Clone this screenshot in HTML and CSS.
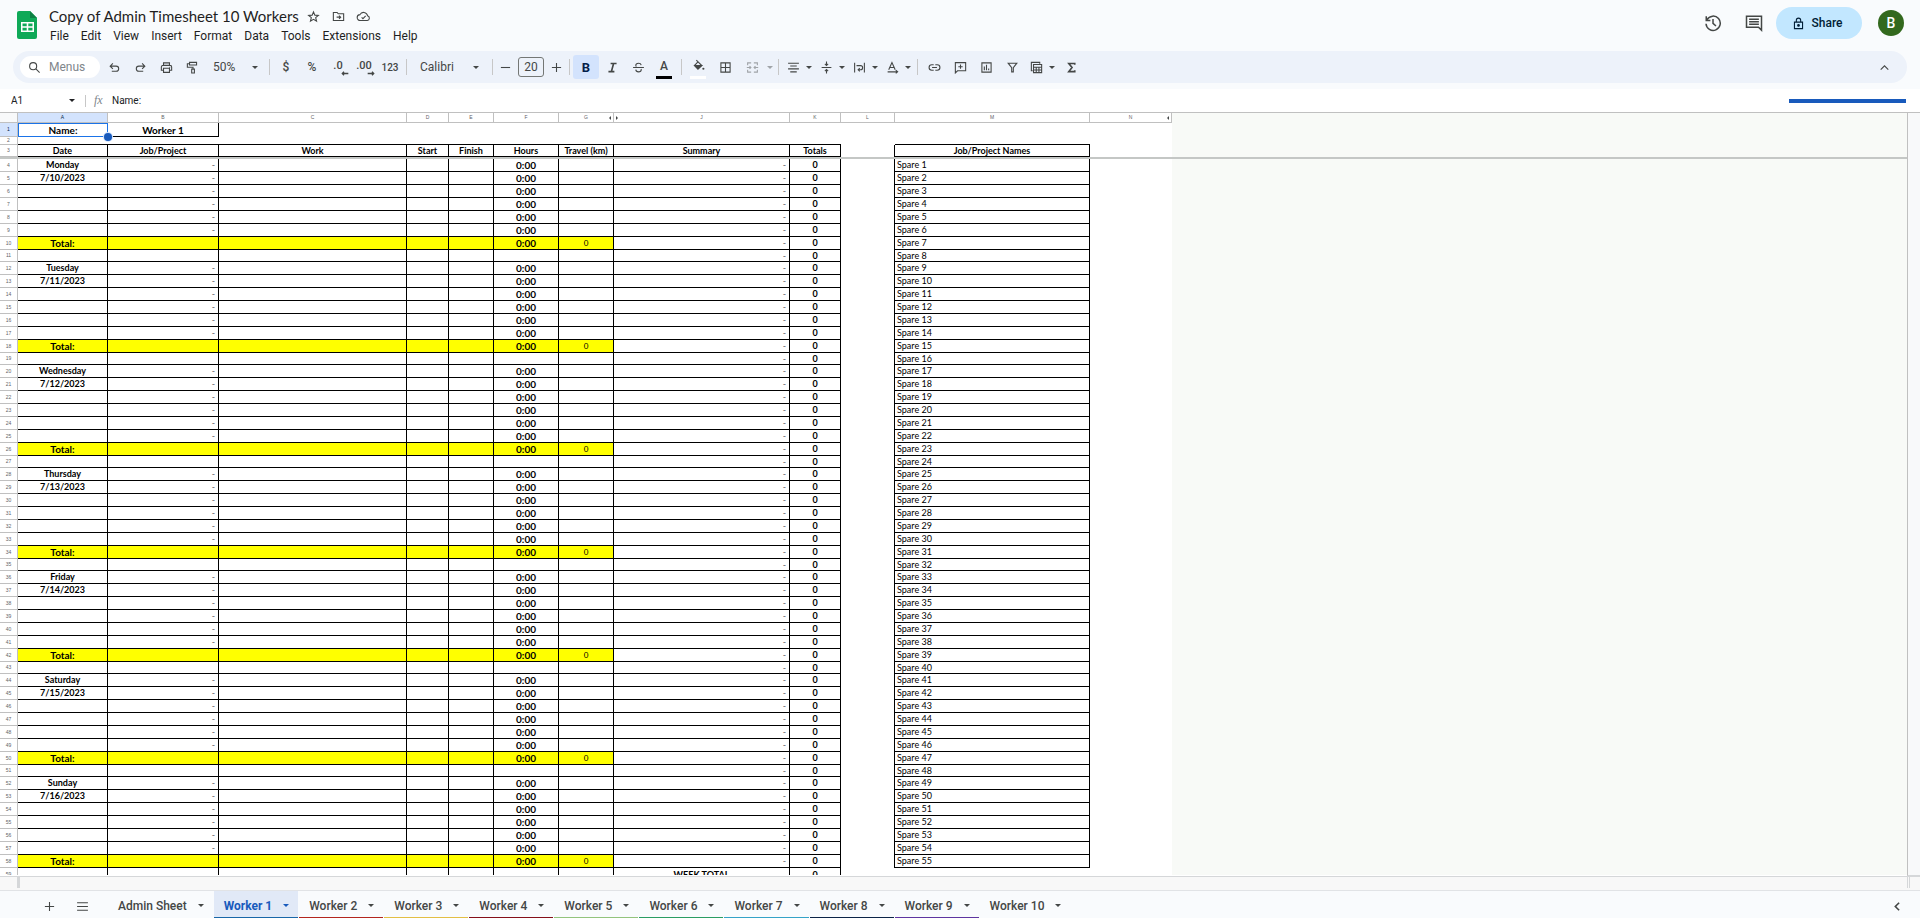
FILE: index.html
```html
<!DOCTYPE html>
<html lang="en">
<head>
<meta charset="utf-8">
<title>Copy of Admin Timesheet 10 Workers</title>
<link rel="stylesheet" href="styles.css">
</head>
<body>
<svg class="sprite" aria-hidden="true">
  <symbol id="caret" viewBox="0 0 8 4"><path d="M0 0h8L4 4z" fill="currentColor"/></symbol>
</svg>

<div class="chrome">
  <header class="header">
    <svg class="logo" viewBox="0 0 20 28" aria-label="Sheets">
      <path d="M2 0h11l7 7v19a2 2 0 0 1-2 2H2a2 2 0 0 1-2-2V2a2 2 0 0 1 2-2z" fill="#0fa958"/>
      <path d="M13 0l7 7h-7z" fill="#0b8043"/>
      <path d="M4 11h13v10H4zM5.500 12.500v2.700h4.200v-2.700zM11.300 12.500v2.700h4.200v-2.700zM5.500 16.800v2.700h4.200v-2.700zM11.300 16.800v2.700h4.200v-2.700z" fill="#fff" fill-rule="evenodd"/>
    </svg>
    <div class="heading">
      <div class="title-row">
        <h1 class="title">Copy of Admin Timesheet 10 Workers</h1>
        <button class="mini" aria-label="Star"><svg class="line" viewBox="0 0 24 24"><path d="M12 3.500l2.500 6 6.500.5-5 4.200 1.600 6.300L12 17.100l-5.600 3.400L8 14.200 3 10l6.500-.5z"/></svg></button>
        <button class="mini" aria-label="Move"><svg class="line" viewBox="0 0 24 24"><path d="M2.500 4.500h7l2 2.500h10v12.500h-19zM8.500 13.200h7M13 10.200l3 3-3 3"/></svg></button>
        <button class="mini" aria-label="Saved to Drive"><svg class="line wide" viewBox="0 0 28 24"><path d="M8 19.500a5.500 5.500 0 0 1-.6-11A7.500 7.500 0 0 1 21.500 10.500 4.600 4.600 0 0 1 21 19.500zM10.500 13.500l2.500 2.500 5-5"/></svg></button>
      </div>
      <nav class="menus">
        <button>File</button><button>Edit</button><button>View</button><button>Insert</button><button>Format</button><button>Data</button><button>Tools</button><button>Extensions</button><button>Help</button>
      </nav>
    </div>
    <div class="actions">
      <button class="action" aria-label="Version history"><svg class="line" viewBox="0 0 24 24"><path d="M4 7.500A9.500 9.500 0 1 1 2.700 13M3 3v5.500h5.500M12 6.500V12.500l4 3.500"/></svg></button>
      <button class="action" aria-label="Comments"><svg class="line" viewBox="0 0 24 24"><path d="M2 3h20v18.500L18 17.500H2zM5.500 7h13M5.500 10.300h13M5.500 13.500h13"/></svg></button>
      <button class="share"><svg class="line" viewBox="0 0 24 24"><path d="M4.500 9.500h15v12h-15zM8 9V6a4 4 0 0 1 8 0v3"/><circle cx="12" cy="15.500" r="1.500" fill="currentColor"/></svg>Share</button>
      <button class="avatar" aria-label="Account">B</button>
    </div>
  </header>

  <div class="toolbar" role="toolbar">
    <label class="search"><svg class="line" viewBox="0 0 24 24"><circle cx="9.500" cy="9.500" r="6.500"/><path d="M14.500 14.500l7 7"/></svg><input type="text" placeholder="Menus" aria-label="Menus"></label>
    <button class="tool" aria-label="Undo"><svg class="line" viewBox="0 0 24 24"><path d="M9 4.500L4 9.500l5 5M4 9.500h11a4.700 4.700 0 0 1 0 9.500H7"/></svg></button>
    <button class="tool" aria-label="Redo"><svg class="line" viewBox="0 0 24 24"><path d="M15 4.500l5 5-5 5M20 9.500H9a4.700 4.700 0 0 0 0 9.500h8"/></svg></button>
    <button class="tool" aria-label="Print"><svg class="line" viewBox="0 0 24 24"><path d="M6.500 8V3.500h11V8M6.500 17H2.500v-6a3 3 0 0 1 3-3h13a3 3 0 0 1 3 3v6h-4M6.500 13.500h11V21h-11z"/><circle cx="18" cy="11.500" r="1" fill="currentColor" stroke="none"/></svg></button>
    <button class="tool" aria-label="Paint format"><svg class="line" viewBox="0 0 24 24"><path d="M6.500 2.500h13v5h-13zM6.500 5h-4v6.500H13V15M10.500 15h5v7h-5z"/></svg></button>
    <span class="select zoom"><select aria-label="Zoom"><option>50%</option></select><svg class="caret"><use href="#caret"/></svg></span>
    <i class="divider"></i>
    <button class="tool text">$</button>
    <button class="tool text">%</button>
    <button class="tool text decimal" aria-label="Decrease decimal places">.0<svg class="line" viewBox="0 0 12 6"><path d="M11 3H2M4.500.5L2 3l2.500 2.500"/></svg></button>
    <button class="tool text decimal" aria-label="Increase decimal places">.00<svg class="line" viewBox="0 0 12 6"><path d="M1 3h9M7.500.5L10 3 7.500 5.500"/></svg></button>
    <button class="tool text small">123</button>
    <i class="divider"></i>
    <span class="select font"><select aria-label="Font"><option>Calibri</option></select><svg class="caret"><use href="#caret"/></svg></span>
    <i class="divider"></i>
    <button class="step" aria-label="Decrease font size"><svg class="line" viewBox="0 0 24 24"><path d="M3.500 12h17"/></svg></button>
    <input class="size" type="text" value="20" aria-label="Font size">
    <button class="step" aria-label="Increase font size"><svg class="line" viewBox="0 0 24 24"><path d="M3.500 12h17M12 3.500v17"/></svg></button>
    <i class="divider"></i>
    <button class="tool text on bold">B</button>
    <button class="tool" aria-label="Italic"><svg class="line heavy" viewBox="0 0 24 24"><path d="M8.500 4.500h11M4.500 19.500h11M14 4.500l-4 15"/></svg></button>
    <button class="tool" aria-label="Strikethrough"><svg class="line" viewBox="0 0 24 24"><path d="M2 12h20M17 7.500C16.500 5 14.500 4 12 4S7 5.200 7 8c0 1 .4 1.700 1 2.300M7 16c.3 2.700 2.300 4 5 4s5-1.200 5-4c0-.6-.1-1-.3-1.400"/></svg></button>
    <button class="tool text swatch black">A</button>
    <i class="divider wide"></i>
    <div class="cell-tools">
      <button class="tool swatch white" aria-label="Fill color"><svg class="line" viewBox="0 0 24 24"><path d="M8 2l10 10-7 6.500L4.500 12 11 5.500"/><path d="M5 12h13l-7 6.500z" fill="currentColor"/><circle cx="21" cy="18" r="2" fill="currentColor" stroke="none"/></svg></button>
      <button class="tool" aria-label="Borders"><svg class="line" viewBox="0 0 24 24"><path d="M3.500 3.500h17v17h-17zM12 3.500v17M3.500 12h17"/></svg></button>
      <button class="tool faded" aria-label="Merge cells"><svg class="line" viewBox="0 0 24 24"><path d="M9.500 3.500H3V8M14.500 3.500H21V8M3 16v4.500h6.500M21 16v4.500h-6.500M1.500 12H9M6.500 9.500L9 12l-2.500 2.500M22.500 12H15M17.500 9.500L15 12l2.500 2.500"/></svg></button>
      <button class="drop faded" aria-label="Merge type"><svg class="caret"><use href="#caret"/></svg></button>
    </div>
    <i class="divider wide"></i>
    <button class="split" aria-label="Horizontal align"><svg class="line" viewBox="0 0 24 24"><path d="M2 4h20M6 9.300h12M2 14.600h20M6 20h12"/></svg><svg class="caret"><use href="#caret"/></svg></button>
    <button class="split" aria-label="Vertical align"><svg class="line" viewBox="0 0 24 24"><path d="M3 12h18M12 1v7M12 23v-7M9 5.500l3 3 3-3M9 18.500l3-3 3 3"/></svg><svg class="caret"><use href="#caret"/></svg></button>
    <button class="split" aria-label="Text wrapping"><svg class="line" viewBox="0 0 24 24"><path d="M3 3v18M21 3v18M6.500 8.500H14a3.500 3.500 0 0 1 0 7.500h-4M12.500 13L9.500 16l3 3"/></svg><svg class="caret"><use href="#caret"/></svg></button>
    <button class="split" aria-label="Text rotation"><svg class="line" viewBox="0 0 24 24"><path d="M5 16l6-13 6 13M7 12h8M3 20h18M18 17l3.500 3-3.500 3"/></svg><svg class="caret"><use href="#caret"/></svg></button>
    <i class="divider"></i>
    <button class="tool" aria-label="Insert link"><svg class="line" viewBox="0 0 24 24"><path d="M10.500 7H7a5 5 0 0 0 0 10h3.500M13.500 7H17a5 5 0 0 1 0 10h-3.500M7.500 12h9"/></svg></button>
    <button class="tool" aria-label="Insert comment"><svg class="line" viewBox="0 0 24 24"><path d="M2.500 3h19v15H6.500l-4 4zM12 6.500v8M8 10.500h8"/></svg></button>
    <button class="tool" aria-label="Insert chart"><svg class="line" viewBox="0 0 24 24"><path d="M3.500 3.500h17v17h-17zM8 10v7M12 7v10M16 14v3"/></svg></button>
    <button class="tool" aria-label="Create a filter"><svg class="line" viewBox="0 0 24 24"><path d="M4 4h16l-6.500 8.500V20h-3v-7.500z"/></svg></button>
    <button class="split" aria-label="Filter views"><svg class="line" viewBox="0 0 24 24"><path d="M18 5V2.500H2.500V18H5M6.500 6.500h15v15h-15zM6.500 11.500h15M6.500 16.500h15M11.500 11.500v10M16.500 11.500v10"/></svg><svg class="caret"><use href="#caret"/></svg></button>
    <button class="tool" aria-label="Functions"><svg class="line heavy" viewBox="0 0 24 24"><path d="M18 7V4.500H7L13 12l-6 7.500h11V17"/></svg></button>
    <button class="tool collapse" aria-label="Hide the menus"><svg class="line" viewBox="0 0 24 24"><path d="M5 16l7-7 7 7"/></svg></button>
  </div>
</div>

<div class="formula">
  <span class="name-box"><input type="text" value="A1" aria-label="Name box"><svg class="caret"><use href="#caret"/></svg></span>
  <i class="divider"></i>
  <span class="fx">fx</span>
  <input class="formula-input" type="text" value="Name:" aria-label="Formula">
  <span class="loading"></span>
</div>

<main class="sheet">
  <div class="grid">
    <table class="cells">
      <colgroup><col class="c-head"><col class="c-a"><col class="c-b"><col class="c-c"><col class="c-d"><col class="c-e"><col class="c-f"><col class="c-g"><col class="c-j"><col class="c-k"><col class="c-l"><col class="c-m"><col class="c-n"><col></colgroup>
      <thead>
        <tr class="letters"><th class="corner"></th><th class="picked">A</th><th>B</th><th>C</th><th>D</th><th>E</th><th>F</th><th class="more-right">G</th><th class="more-left">J</th><th>K</th><th>L</th><th>M</th><th class="more-right">N</th><td class="void"></td></tr>
      </thead>
      <tbody id="rows"></tbody>
    </table>
  </div>
  <div class="v-scroll"></div>
</main>
<div class="h-scroll"><span class="h-start"></span><span class="h-end"></span></div>

<footer class="tabs">
  <button class="tab-tool" aria-label="Add sheet"><svg class="line" viewBox="0 0 24 24"><path d="M3.500 12h17M12 3.500v17"/></svg></button>
  <button class="tab-tool" aria-label="All sheets"><svg class="line" viewBox="0 0 24 24"><path d="M2 5h20M2 12h20M2 19h20"/></svg></button>
  <div class="tab-list">
    <button class="tab first">Admin Sheet<svg class="caret"><use href="#caret"/></svg></button>
    <button class="tab active">Worker 1<svg class="caret"><use href="#caret"/></svg></button>
    <button class="tab red">Worker 2<svg class="caret"><use href="#caret"/></svg></button>
    <button class="tab gold">Worker 3<svg class="caret"><use href="#caret"/></svg></button>
    <button class="tab maroon">Worker 4<svg class="caret"><use href="#caret"/></svg></button>
    <button class="tab lime">Worker 5<svg class="caret"><use href="#caret"/></svg></button>
    <button class="tab green">Worker 6<svg class="caret"><use href="#caret"/></svg></button>
    <button class="tab cyan">Worker 7<svg class="caret"><use href="#caret"/></svg></button>
    <button class="tab navy">Worker 8<svg class="caret"><use href="#caret"/></svg></button>
    <button class="tab purple">Worker 9<svg class="caret"><use href="#caret"/></svg></button>
    <button class="tab">Worker 10<svg class="caret"><use href="#caret"/></svg></button>
  </div>
  <button class="tab-tool end" aria-label="Show side panel"><svg class="line heavy" viewBox="0 0 24 24"><path d="M15 5l-7 7 7 7"/></svg></button>
</footer>
<script src="rows.js"></script>
</body>
</html>
```

FILE: rows.js
```js
const COLUMNS = ["a", "b", "c", "d", "e", "f", "g", "j", "k", "l", "m", "n", "void"];
const DAYS = ["Monday", "Tuesday", "Wednesday", "Thursday", "Friday", "Saturday", "Sunday"];
const body = document.getElementById("rows");

function addRow(number, kind, text) {
  const row = body.insertRow();
  row.className = kind;
  const head = document.createElement("th");
  head.textContent = number;
  row.append(head);
  for (const column of COLUMNS) {
    const cell = row.insertCell();
    cell.className = column;
    cell.textContent = text[column] || "";
  }
  return row;
}

const first = addRow(1, "title-cells", { a: "Name:", b: "Worker 1" });
first.cells[0].classList.add("picked");
const handle = document.createElement("span");
handle.className = "handle";
first.cells[1].append(handle);
addRow(2, "spacer", {});
addRow(3, "boxed labels", {
  a: "Date", b: "Job/Project", c: "Work", d: "Start", e: "Finish", f: "Hours",
  g: "Travel (km)", j: "Summary", k: "Totals", m: "Job/Project Names"
});

const freeze = body.insertRow();
freeze.className = "freeze";
freeze.insertCell().colSpan = COLUMNS.length + 1;

for (let number = 4; number <= 58; number++) {
  const day = Math.floor((number - 4) / 8);
  const step = (number - 4) % 8;
  const text = { j: "-", k: "0", m: "Spare " + (number - 3) };
  let kind = "boxed";
  if (step < 6) {
    text.b = "-";
    text.f = "0:00";
    if (step === 0) text.a = DAYS[day];
    if (step === 1) text.a = "7/" + (10 + day) + "/2023";
  } else if (step === 6) {
    kind += " total";
    text.a = "Total:";
    text.f = "0:00";
    text.g = "0";
  } else {
    kind += " short";
  }
  addRow(number, kind, text);
}
addRow(59, "boxed week", { j: "WEEK TOTAL", k: "0" });
```

FILE: styles.css
```css
* { box-sizing: border-box; }
body {
  margin: 0;
  height: 100vh;
  display: flex;
  flex-direction: column;
  overflow: hidden;
  background: #fff;
  color: #202124;
  font-family: Roboto, "Liberation Sans", sans-serif;
  font-size: 12px;
}
button, input, select {
  font: inherit;
  color: inherit;
  border: 0;
  padding: 0;
  margin: 0;
  background: none;
  outline: none;
}
select { appearance: none; }
button { display: flex; align-items: center; justify-content: center; }
.sprite { position: absolute; width: 0; height: 0; }
.line { width: 13px; height: 13px; fill: none; stroke: currentColor; stroke-width: 2; flex: none; }
.line.heavy { stroke-width: 3; }
.line.wide { width: 15px; }
.caret { width: 6px; height: 3px; flex: none; }

.chrome { background: #f9fbfd; padding-bottom: 6px; flex: none; }
.header { display: flex; height: 51px; padding: 0 16px 0 17px; }
.logo { width: 20px; height: 28px; margin-top: 11px; }
.heading { margin-left: 12px; padding-top: 5px; }
.title-row { display: flex; align-items: center; height: 22px; }
.title { margin: 0 2px 0 0; font: 400 15px/20px Lato, sans-serif; color: #1f1f1f; }
.mini { width: 25px; color: #444746; }
.menus { display: flex; gap: 12px; padding-left: 1px; line-height: 18px; color: #1f1f1f; }
.actions { display: flex; align-items: center; margin-left: auto; height: 46px; }
.action { width: 41px; color: #444746; }
.action .line { width: 18px; height: 18px; }
.share {
  width: 86px; height: 32px; margin: 0 16px 0 2px; border-radius: 16px; gap: 7px;
  background: #c2e7ff; color: #001d35; font-weight: 500;
}
.share .line { margin-left: -4px; }
.avatar { width: 26px; height: 26px; border-radius: 50%; background: #33691e; color: #fff; font-size: 14px; font-weight: 500; }

.toolbar {
  display: flex; align-items: center; height: 32px; margin: 0 13px; padding: 0 10px 0 7px;
  border-radius: 16px; background: #edf2fa; color: #444746;
}
.search { display: flex; align-items: center; width: 80px; height: 22px; padding-left: 8px; gap: 8px; margin-right: 1px; border-radius: 11px; background: #fff; }
.search input { width: 44px; }
.search input::placeholder { color: #80868b; }
.tool { width: 26px; height: 24px; border-radius: 3px; flex: none; }
.tool.text { font-weight: 500; }
.tool.small { font-size: 10px; }
.decimal { position: relative; padding-bottom: 4px; }
.tool.decimal { font-size: 11px; }
.decimal .line { position: absolute; right: 2px; bottom: 3px; width: 8px; height: 5px; }
.tool.on { background: #d3e3fd; color: #041e49; }
.tool.bold { font-weight: 700; font-size: 13px; }
.swatch { position: relative; }
.swatch::after { content: ""; position: absolute; left: 5px; right: 5px; bottom: 0; height: 3px; }
.swatch .line, .swatch.text { padding-bottom: 2px; }
.swatch .line { height: 15px; margin-bottom: 2px; }
.swatch.black::after { background: #000; }
.swatch.white::after { background: #fff; }
.faded { opacity: .45; }
.divider { width: 1px; height: 16px; margin: 0 3px; background: #c7c7c7; flex: none; }
.divider.wide { margin: 0 3px 0 4px; }
.cell-tools { display: flex; gap: 1px; }
.select { display: flex; align-items: center; justify-content: space-between; }
.select.zoom { width: 61px; padding: 0 8px; }
.select.font { width: 79px; padding: 0 10px; }
.step { width: 19px; height: 24px; flex: none; }
.size { width: 26px; height: 20px; margin: 0 3px; border: 1px solid #747775; border-radius: 3px; text-align: center; flex: none; }
.drop { width: 8px; height: 24px; }
.split { width: 33px; height: 24px; gap: 6px; padding-left: 1px; flex: none; }
.collapse { margin-left: auto; }

.formula { display: flex; align-items: center; height: 23px; padding: 0 14px 0 11px; font-size: 10px; flex: none; }
.name-box { display: flex; align-items: center; justify-content: space-between; width: 64px; }
.name-box input { width: 40px; }
.formula .divider { height: 12px; margin: 0 8px 0 10px; }
.fx { width: 18px; color: #80868b; font: italic 12px "Liberation Serif", serif; }
.formula-input { flex: 1; }
.loading { width: 117px; height: 4px; background: #185abc; }

.sheet { display: flex; flex: 1; min-height: 0; border-top: 1px solid #c0c0c0; }
.grid { flex: 1; min-width: 0; overflow: hidden; border-bottom: 1px solid #fff; }
.v-scroll { width: 13px; border-left: 1px solid #c0c0c0; border-bottom: 1px solid #d5d7d9; background: #f8f9fa; }
.h-scroll { display: flex; justify-content: space-between; height: 14px; padding: 0 10px 2px 17px; background: #f8f8f8; border-top: 1px solid #d5d7d9; flex: none; }
.h-start { width: 3px; background: #d5d7d9; }
.h-end { width: 3px; border: solid #d5d7d9; border-width: 0 1px; }

.cells { width: 100%; table-layout: fixed; border-spacing: 0; font-family: Lato, sans-serif; color: #000; }
.c-head { width: 18px; } .c-a { width: 90px; } .c-b { width: 111px; } .c-c { width: 188px; }
.c-d { width: 42px; } .c-e { width: 45px; } .c-f { width: 65px; } .c-g { width: 55px; }
.c-j { width: 176px; } .c-k { width: 51px; } .c-l { width: 54px; } .c-m { width: 195px; } .c-n { width: 82px; }
.cells th, .cells td { padding: 0; white-space: nowrap; text-align: center; line-height: 12px; }
.cells th {
  border: solid #c0c0c0; border-width: 0 1px 1px 0; background: #fff;
  color: #5f6368; font: 5px/7px "Liberation Sans", sans-serif;
}
.cells .letters { height: 10px; }
.cells .letters th { position: relative; }
.cells .letters td { line-height: 8px; }
.cells .corner { background: #f8f9fa; }
.cells th.picked { background: #d3e3fd; color: #041e49; }
.more-right::after, .more-left::before { content: ""; position: absolute; top: 3px; border: solid transparent; border-width: 2px 0; }
.more-right::after { right: 2px; border-right: 2px solid #444746; }
.more-left::before { left: 2px; border-left: 2px solid #444746; }
.cells .void { background: #f8faf7; }

.cells tr { height: 13px; }
.cells .title-cells { height: 14px; }
.cells .spacer { height: 8px; }
.cells .spacer td, .cells .spacer th { line-height: 7px; }
.cells .labels, .cells .short { height: 12px; }
.cells .short td, .cells .labels td { line-height: 11px; }
.title-cells td { font-size: 10px; font-weight: 700; }
.title-cells .a { position: relative; border: 1px solid #1a73e8; }
.title-cells .b { border: solid #000; border-width: 0 1px 1px 0; }
.handle { position: absolute; right: -5px; bottom: -5px; width: 8px; height: 8px; border-radius: 50%; background: #185abc; box-shadow: 0 0 0 1px #d3e3fd; z-index: 1; }
.spacer td:not(.l):not(.n):not(.void) { border-bottom: 1px solid #000; }
.boxed td:not(.l):not(.n):not(.void) { border: solid #000; border-width: 0 1px 1px 0; }
.boxed .l { border-right: 1px solid #000; }
.cells .labels td { font-size: 9px; font-weight: 700; }
.boxed .a, .boxed .k, .boxed .j { font-size: 9px; font-weight: 700; }
.boxed .f, .total .a { font-size: 10px; font-weight: 700; }
.boxed .g { font-size: 8px; }
.cells .boxed:not(.labels) .b, .cells .boxed:not(.labels):not(.week) .j { text-align: right; padding-right: 3px; font-size: 9px; font-weight: 400; color: #5f6368; }
.cells .boxed:not(.labels) .m { text-align: left; padding-left: 2px; font-size: 9px; }
.total .a, .total .b, .total .c, .total .d, .total .e, .total .f, .total .g { background: #ff0; }
.cells .week td { padding-top: 1px; }
.cells .week .l, .cells .week .m { border-color: transparent !important; }
.cells .freeze { height: 2px; }
.cells .freeze td { height: 2px; line-height: 0; background: #c4c7c5; }

.tabs { display: flex; height: 28px; padding: 0 8px 0 33px; border-top: 1px solid #e1e3e6; background: #f9fbfd; color: #444746; flex: none; }
.tab-tool { width: 33px; padding-top: 3px; }
.tab-list { display: flex; gap: 1px; margin-left: 9px; }
.tab { padding: 3px 9px 0 10px; gap: 11px; border-bottom: 1px solid transparent; font-weight: 500; }
.tab.active { background: #e1e9f7; color: #185abc; font-weight: 700; border-color: #1967a8; }
.tab.red { border-color: #b3261e; }
.tab.gold { border-color: #e3bf45; }
.tab.maroon { border-color: #85101a; }
.tab.lime { border-color: #93c47d; }
.tab.green { border-color: #2a9d63; }
.tab.cyan { border-color: #35a3c7; }
.tab.navy { border-color: #0b2447; }
.tab.purple { border-color: #5e35a0; }
.tab-tool.end { width: 29px; margin-left: auto; }
```
